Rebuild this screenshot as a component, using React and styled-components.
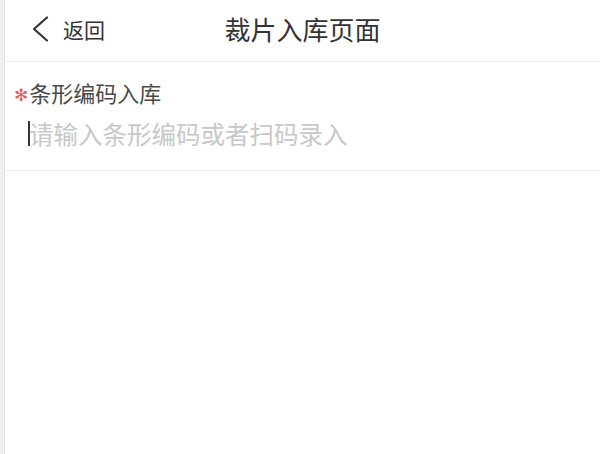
import styled, { createGlobalStyle } from "styled-components";

const GlobalStyle = createGlobalStyle`
    html, body {
        margin: 0;
        padding: 0;
        background: #fff;
        font-family: "Noto Sans CJK SC", "Noto Sans", sans-serif;
    }
`

const Page = styled.div`
    display: flex;
    width: 600px;
    height: 454px;
    background: #fff;
`

const Gutter = styled.div`
    width: 4px;
    background: #f0f0f0;
    border-right: 1px solid #e2e2e2;
`

const Main = styled.div`
    flex: 1;
    display: flex;
    flex-direction: column;
`

const Header = styled.header`
    height: 62px;
    box-sizing: border-box;
    padding-bottom: 4px;
    display: grid;
    grid-template-columns: 1fr auto 1fr;
    align-items: center;
    border-bottom: 1px solid #ececec;

    .title {
        font-size: 26px;
        color: #333;
    }
`

const BackBtn = styled.div`
    display: flex;
    align-items: center;
    gap: 14px;
    padding-left: 27px;
    color: #333;
    font-size: 21px;
    cursor: pointer;

    svg {
        display: block;
    }
`

const FormItem = styled.div`
    display: flex;
    flex-direction: column;
    padding: 16px 0 0 9px;
    height: 92px;
    border-bottom: 1px solid #ececec;
`

const Label = styled.label`
    display: flex;
    align-items: center;
    height: 28px;
    font-size: 22px;
    line-height: 28px;
    color: #4a4a4a;

    .required {
        position: relative;
        top: 3px;
        color: #e85a5a;
        font-family: "DejaVu Sans", sans-serif;
        font-size: 17px;
        margin-right: 1px;
    }
`

const InputRow = styled.div`
    display: flex;
    align-items: center;
    margin-top: 12px;
    padding-left: 14px;
    height: 30px;
`

const Caret = styled.span`
    width: 2px;
    height: 25px;
    background: #333;
`

const Input = styled.input`
    flex: 1;
    border: none;
    outline: none;
    padding: 0;
    margin-left: -1px;
    font-family: inherit;
    font-size: 24.5px;
    color: #333;
    background: transparent;
    caret-color: transparent;

    &::placeholder {
        color: #c8c8c8;
    }
`

function App(){
    return <Page>
        <GlobalStyle/>
        <Gutter/>
        <Main>
            <Header>
                <BackBtn>
                    <svg width="17" height="26" viewBox="0 0 17 26" fill="none">
                        <polyline points="15,1.5 2,13 15,24.5" stroke="#333" strokeWidth="2.2" strokeLinecap="round" strokeLinejoin="round"/>
                    </svg>
                    <span>返回</span>
                </BackBtn>
                <span className="title">裁片入库页面</span>
                <span/>
            </Header>

            <FormItem>
                <Label htmlFor="barcode"><span className="required">✻</span>条形编码入库</Label>
                <InputRow>
                    <Caret/>
                    <Input id="barcode" placeholder="请输入条形编码或者扫码录入"/>
                </InputRow>
            </FormItem>
        </Main>
    </Page>
}

export default App;
